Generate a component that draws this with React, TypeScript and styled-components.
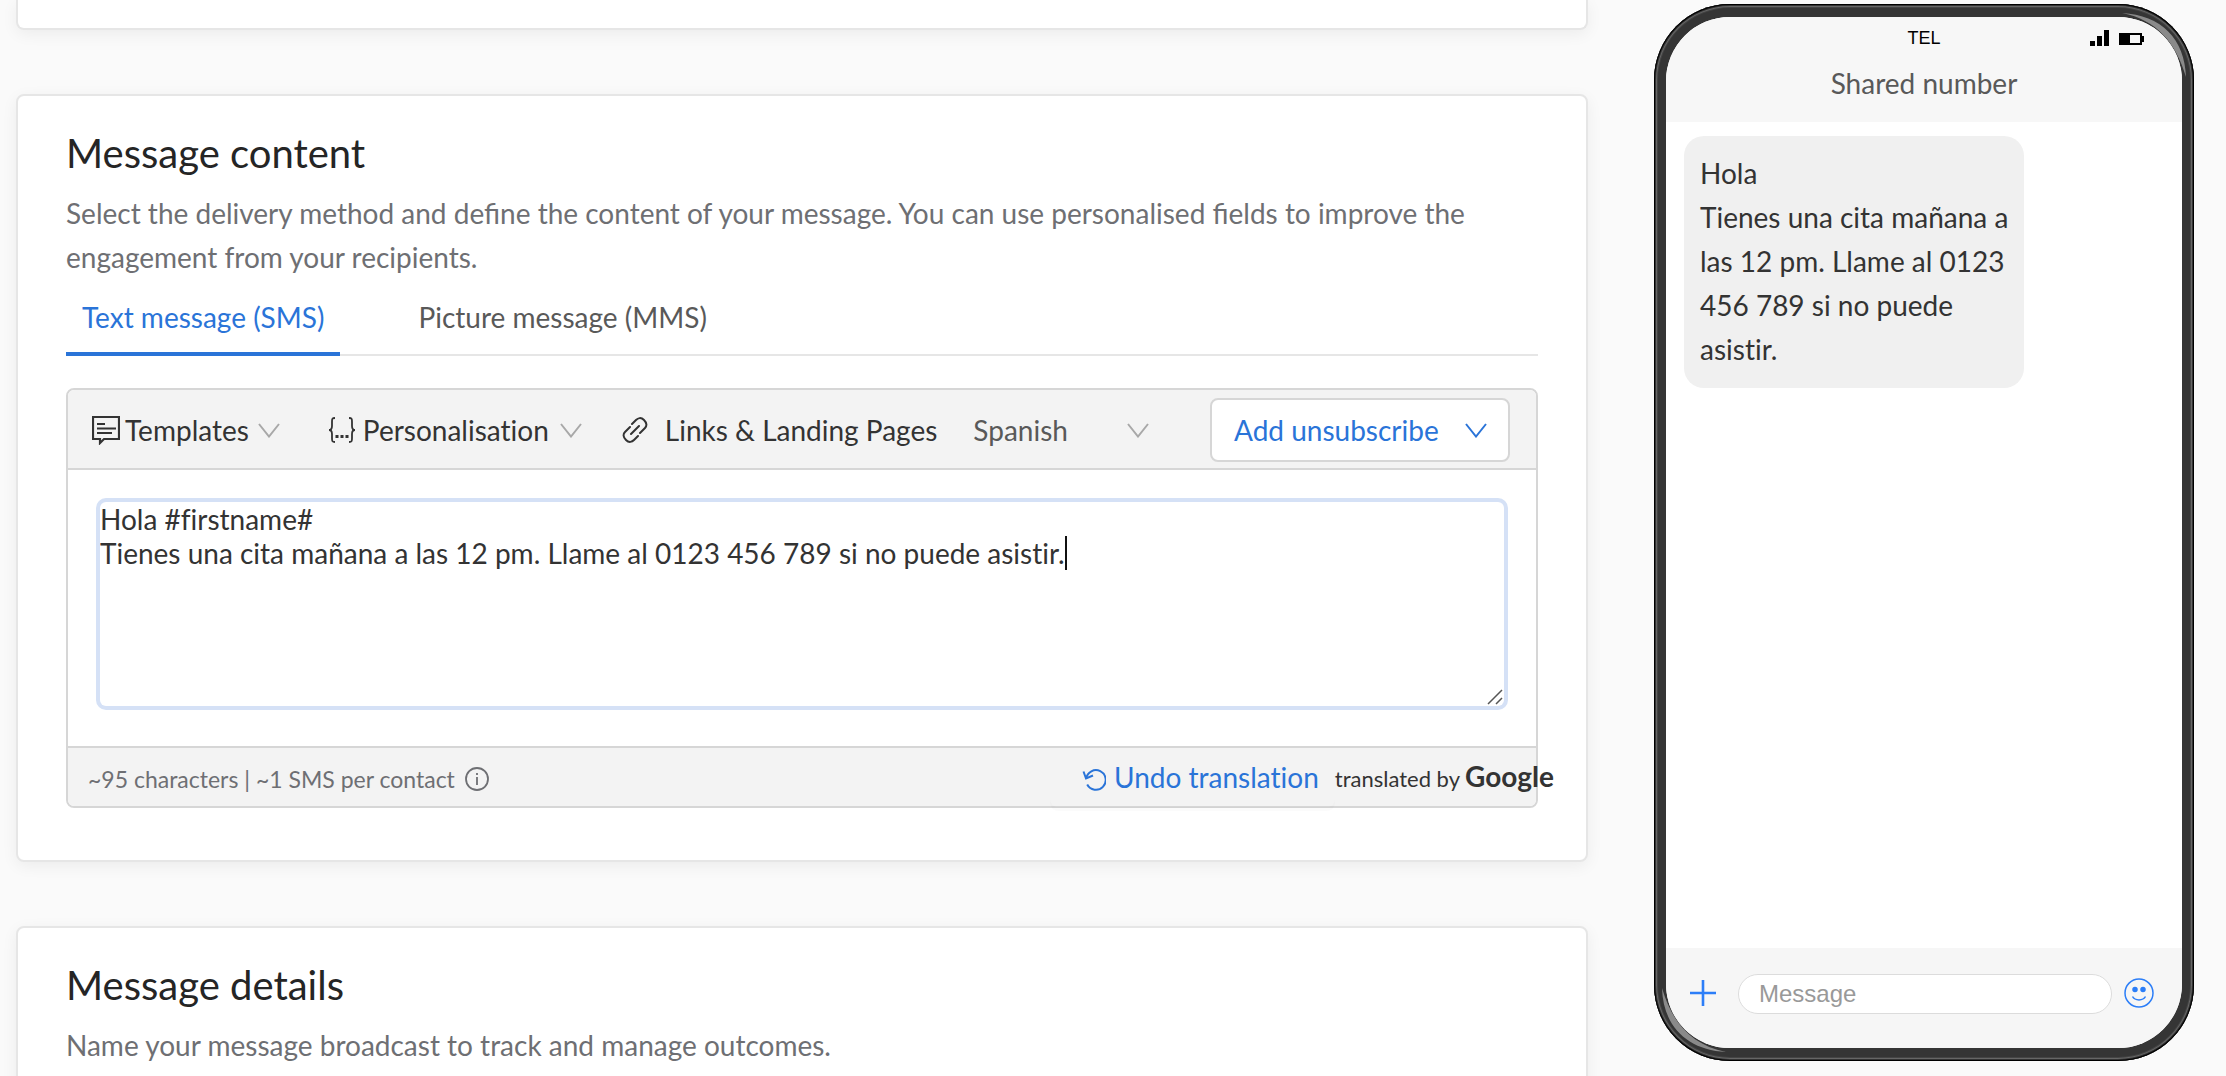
import React, { useEffect, useRef, useState } from "react";
import styled, { createGlobalStyle, css } from "styled-components";

const color = {
  page: "#fafafa",
  line: "#e6e6e6",
  edge: "#d6d6d6",
  bar: "#f3f3f3",
  ink: "#333333",
  title: "#252525",
  muted: "#6e6f73",
  soft: "#595959",
  blue: "#2a74d8",
  ios: "#2c7ef8",
};

const GlobalStyle = createGlobalStyle`
  *, *::before, *::after { box-sizing: border-box; }
  body {
    margin: 0;
    height: 100vh;
    overflow: hidden;
    background: ${color.page};
    color: ${color.ink};
    font: 400 28px/44px Lato, "Open Sans", sans-serif;
    font-variant-ligatures: none;
  }
  button, input, select, textarea {
    font: inherit;
    font-variant-ligatures: none;
    color: inherit;
  }
`;

const Page = styled.div`
  display: grid;
  grid-template-columns: minmax(0, 1fr) 540px;
  column-gap: 66px;
  align-items: start;
  height: 100vh;
  padding: 0 32px 0 16px;
  overflow: hidden;
`;

const Cards = styled.main`
  display: flex;
  flex-direction: column;
  gap: 64px;
`;

const Card = styled.section`
  padding: 32px 48px 52px;
  background: #fff;
  border: 2px solid ${color.line};
  border-radius: 8px;
  box-shadow: 0 4px 16px rgba(0, 0, 0, 0.06);
`;

const CardTail = styled(Card)`
  height: 30px;
  padding: 0;
  border-top: 0;
  border-radius: 0 0 8px 8px;
`;

const Title = styled.h2`
  margin: 0;
  color: ${color.title};
  font-size: 40px;
  font-weight: 400;
  line-height: 50px;
`;

const Lead = styled.p`
  margin: 13px 0 0;
  color: ${color.muted};
  font-variant-ligatures: normal;
`;

const Tabs = styled.div`
  display: flex;
  gap: 62px;
  margin-top: 4px;
  box-shadow: inset 0 -2px 0 ${color.line};
`;

const Tab = styled.button<{ $active?: boolean }>`
  padding: 12px 16px 13px;
  border: 0;
  border-bottom: 4px solid ${(p) => (p.$active ? color.blue : "transparent")};
  background: none;
  color: ${(p) => (p.$active ? color.blue : color.soft)};
`;

const Editor = styled.div`
  margin-top: 32px;
  border: 2px solid ${color.edge};
  border-radius: 8px;
`;

const Toolbar = styled.div`
  display: flex;
  align-items: center;
  padding: 8px 26px 6px 24px;
  background: ${color.bar};
  border-bottom: 2px solid ${color.edge};
  border-radius: 6px 6px 0 0;
`;

const Tool = styled.button<{ $gap?: number; $after?: number }>`
  display: flex;
  align-items: center;
  gap: ${(p) => p.$gap ?? 5}px;
  margin-right: ${(p) => p.$after ?? 48}px;
  padding: 0;
  border: 0;
  background: none;
  white-space: nowrap;

  > svg:last-child:not(:first-child) { margin-left: 4px; }
`;

const Language = styled.label`
  display: grid;
  align-items: center;
  width: 176px;

  > * { grid-area: 1 / 1; }
  > svg { justify-self: end; pointer-events: none; }
`;

const LanguageSelect = styled.select`
  appearance: none;
  width: 100%;
  padding: 0;
  border: 0;
  background: none;
  color: ${color.soft};
`;

const Unsubscribe = styled.button`
  display: flex;
  align-items: center;
  justify-content: space-between;
  width: 300px;
  height: 64px;
  margin-left: auto;
  padding: 0 21px 0 22px;
  background: #fff;
  border: 2px solid ${color.edge};
  border-radius: 8px;
  color: ${color.blue};
`;

const EditorBody = styled.div`
  padding: 32px 32px 40px;
`;

const MessageField = styled.div`
  position: relative;
`;

const MessageBox = styled.textarea`
  display: block;
  width: 100%;
  height: 204px;
  padding: 0;
  background: #fff;
  border: 0;
  border-radius: 6px;
  outline: 0;
  box-shadow: 0 0 0 4px #d5e1f6;
  caret-color: transparent;
  line-height: 34px;
  resize: vertical;

  &::-webkit-resizer { display: none; }
`;

const Caret = styled.span`
  position: absolute;
  width: 2px;
  height: 34px;
  background: #111;
  pointer-events: none;
`;

const Grip = styled.svg`
  position: absolute;
  right: 1px;
  bottom: 1px;
  fill: none;
  stroke: #555;
  pointer-events: none;
`;

const EditorFooter = styled.div`
  display: flex;
  align-items: center;
  height: 60px;
  padding-left: 20px;
  background: ${color.bar};
  border-top: 2px solid ${color.edge};
  border-radius: 0 0 6px 6px;
`;

const Count = styled.span`
  display: flex;
  align-items: center;
  gap: 10px;
  padding-top: 4px;
  color: ${color.muted};
  font-size: 23px;
`;

const Translation = styled.div`
  display: flex;
  align-items: center;
  margin: 0 -18px 0 auto;
  white-space: nowrap;
`;

const Undo = styled.button`
  display: flex;
  align-items: center;
  gap: 8px;
  height: 60px;
  padding: 0 16px 0 32px;
  border: 0;
  border-radius: 8px;
  background: none;
  box-shadow: 0 4px 0 rgba(0, 0, 0, 0.015);
  color: ${color.blue};
`;

const Credit = styled.span`
  font-size: 22px;

  strong { font-size: 28px; font-weight: 700; }
`;

const Phone = styled.aside`
  position: relative;
  display: flex;
  flex-direction: column;
  height: 1057px;
  margin-top: 4px;
  padding: 13px 12px;
  border-radius: 76px;
  background: #353535;
  box-shadow: inset 0 0 0 1px #000, inset 0 0 0 2px #333, inset 0 0 0 3px #666,
    inset 0 0 0 4px #444;
`;

const Shine = styled.svg`
  position: absolute;
  inset: 0;
  width: 100%;
  height: 100%;
  pointer-events: none;
`;

const Screen = styled.div`
  display: flex;
  flex: 1;
  flex-direction: column;
  overflow: hidden;
  border-radius: 64px;
  background: #fff;
`;

const PhoneHeader = styled.header`
  height: 105px;
  background: #f7f7f7;
  text-align: center;
`;

const StatusBar = styled.div`
  display: grid;
  grid-template-columns: 1fr auto 1fr;
  align-items: center;
  height: 44px;
  padding: 0 38px 2px;
  color: #000;
  font: 18px/40px "Liberation Sans", Arial, sans-serif;
`;

const StatusIcons = styled.svg`
  grid-column: 3;
  justify-self: end;
`;

const Carrier = styled.span`
  grid-column: 2;
`;

const Sender = styled.div`
  color: ${color.soft};
`;

const Thread = styled.div`
  flex: 1;
  padding: 14px 18px;
`;

const Bubble = styled.p`
  max-width: 340px;
  margin: 0;
  padding: 15px 8px 17px 16px;
  border-radius: 20px;
  background: #f0f0f0;
  white-space: pre-line;
`;

const Composer = styled.footer`
  display: flex;
  align-items: flex-start;
  height: 100px;
  padding: 26px 28px 0 24px;
  background: #f6f6f6;
`;

const IconButton = styled.button`
  display: flex;
  align-items: center;
  height: 38px;
  padding: 0;
  border: 0;
  background: none;
  color: ${color.ios};
`;

const Reply = styled.input`
  flex: 1;
  min-width: 0;
  height: 40px;
  margin: 0 12px 0 22px;
  padding: 0 20px;
  border: 1px solid #dcdcdc;
  border-radius: 20px;
  background: #fff;
  font: 24px/36px "Liberation Sans", Arial, sans-serif;

  &::placeholder { color: #999; opacity: 1; }
`;

const stroke = css`
  flex: none;
  fill: none;
  stroke: currentColor;
`;
const Glyph = styled.svg`${stroke}`;
const ChevronGlyph = styled.svg<{ $tone: string }>`
  ${stroke}
  color: ${(p) => p.$tone};
`;

const Chevron = ({ tone = "#a8a8a8" }: { tone?: string }) => (
  <ChevronGlyph $tone={tone} width="22" height="16" viewBox="0 0 22 16" strokeWidth="2">
    <path d="M1 2 11 14.500 21 2" />
  </ChevronGlyph>
);

const TemplateIcon = () => (
  <Glyph width="28" height="30" viewBox="0 0 28 30" strokeWidth="2.200">
    <path d="M1 2H27V24H12L8 28V24H1Z" />
    <path d="M5 9H13M5 13.500H24M5 18H20" strokeWidth="1.800" />
  </Glyph>
);

const BracesIcon = () => (
  <Glyph width="28" height="28" viewBox="0 0 28 28" strokeWidth="1.800">
    <path d="M7 2C4 2 4 3 4 6V10C4 12 3 14 1 14 3 14 4 16 4 18V22C4 25 4 26 7 26M21 2C24 2 24 3 24 6V10C24 12 25 14 27 14 25 14 24 16 24 18V22C24 25 24 26 21 26" />
    <path d="M7.500 20.500H10.500M12.500 20.500H15.500M17.500 20.500H20.500" strokeWidth="3" />
  </Glyph>
);

const LinkIcon = () => (
  <Glyph width="26" height="26" viewBox="0 0 26 26" strokeWidth="2" strokeLinecap="round">
    <path d="M10 7 14 3C16 1 19 0 22 3 25 6 25 9 23 11L18 16M8 10 3 15C1 17 1 20 4 23 7 26 10 25 12 23L16 19M9 17 17 9" />
  </Glyph>
);

const InfoIcon = () => (
  <Glyph width="24" height="24" viewBox="0 0 24 24" strokeWidth="1.800">
    <circle cx="12" cy="12" r="11" />
    <path d="M12 10V18M12 6V8" />
  </Glyph>
);

const UndoIcon = () => (
  <Glyph width="24" height="30" viewBox="0 0 24 30" strokeWidth="2">
    <path d="M4.200 16.500A9.800 9.800 0 1 1 5.200 22.500" />
    <path d="M1.500 9.500 4 16.500 11 13.500" />
  </Glyph>
);

const SAMPLE =
  "Hola #firstname#\nTienes una cita mañana a las 12 pm. Llame al 0123 456 789 si no puede asistir.";

const LINE = 34;

export default function App() {
  const [text, setText] = useState(SAMPLE);
  const [caret, setCaret] = useState({ left: 0, top: 0 });
  const box = useRef<HTMLTextAreaElement>(null);

  // Keeps the drawn caret at the end of the last line.
  useEffect(() => {
    const ctx = document.createElement("canvas").getContext("2d");
    if (!ctx || !box.current) return;
    const { fontSize, fontFamily } = getComputedStyle(box.current);
    ctx.font = `${fontSize} ${fontFamily}`;
    const lines = text.split("\n");
    const width = ctx.measureText(lines[lines.length - 1]).width;
    setCaret({ left: Math.round(width), top: (lines.length - 1) * LINE });
  }, [text]);

  return (
    <>
      <GlobalStyle />
      <Page>
        <Cards>
          <CardTail />
          <Card>
            <Title>Message content</Title>
            <Lead>
              Select the delivery method and define the content of your message. You can use
              personalised fields to improve the engagement from your recipients.
            </Lead>
            <Tabs role="tablist">
              <Tab role="tab" aria-selected $active>Text message (SMS)</Tab>
              <Tab role="tab" aria-selected={false}>Picture message (MMS)</Tab>
            </Tabs>
            <Editor>
              <Toolbar>
                <Tool><TemplateIcon />Templates<Chevron /></Tool>
                <Tool $gap={7} $after={40}><BracesIcon />Personalisation<Chevron /></Tool>
                <Tool $gap={17} $after={36}><LinkIcon />Links &amp; Landing Pages</Tool>
                <Language>
                  <LanguageSelect aria-label="Language" defaultValue="Spanish">
                    <option>Spanish</option>
                    <option>English</option>
                  </LanguageSelect>
                  <Chevron />
                </Language>
                <Unsubscribe>Add unsubscribe<Chevron tone={color.blue} /></Unsubscribe>
              </Toolbar>
              <EditorBody>
                <MessageField>
                  <MessageBox
                    ref={box}
                    aria-label="Message"
                    spellCheck={false}
                    value={text}
                    onChange={(e) => setText(e.target.value)}
                  />
                  <Caret style={caret} />
                  <Grip width="16" height="16" viewBox="0 0 16 16" strokeWidth="1.500">
                    <path d="M1 15 15 1M9 15 15 9" />
                  </Grip>
                </MessageField>
              </EditorBody>
              <EditorFooter>
                <Count>~95 characters | ~1 SMS per contact<InfoIcon /></Count>
                <Translation>
                  <Undo><UndoIcon />Undo translation</Undo>
                  <Credit>translated by <strong>Google</strong></Credit>
                </Translation>
              </EditorFooter>
            </Editor>
          </Card>
          <Card>
            <Title>Message details</Title>
            <Lead>Name your message broadcast to track and manage outcomes.</Lead>
          </Card>
        </Cards>

        <Phone aria-label="Preview">
          <Screen>
            <PhoneHeader>
              <StatusBar>
                <Carrier>TEL</Carrier>
                <StatusIcons width="54" height="16" viewBox="0 0 54 16">
                  <path d="M0 11H5V16H0ZM7 6H12V16H7ZM14 0H19V16H14ZM29 3H52V6H54V12H52V15H29ZM40 5V13H50V5Z" fillRule="evenodd" />
                </StatusIcons>
              </StatusBar>
              <Sender>Shared number</Sender>
            </PhoneHeader>
            <Thread>
              <Bubble>{text.replace(" #firstname#", "")}</Bubble>
            </Thread>
            <Composer>
              <IconButton aria-label="Add attachment">
                <Glyph width="26" height="26" viewBox="0 0 26 26" strokeWidth="2.600">
                  <path d="M13 0V26M0 13H26" />
                </Glyph>
              </IconButton>
              <Reply aria-label="Reply" placeholder="Message" />
              <IconButton aria-label="Emoji">
                <Glyph width="30" height="30" viewBox="0 0 30 30" strokeWidth="1.500">
                  <circle cx="15" cy="15" r="14" />
                  <path d="M8.500 18.500C11 23 19 23 21.500 18.500" />
                  <circle cx="11" cy="11.500" r="2" fill="currentColor" />
                  <circle cx="19" cy="11.500" r="2" fill="currentColor" />
                </Glyph>
              </IconButton>
            </Composer>
          </Screen>
          <Shine viewBox="0 0 540 1057" fill="#8a8a8a">
            <path d="M468 9C507 11 531 35 532 73 522 39 503 16 468 9Z" />
            <path d="M72 1048C33 1046 9 1022 8 984 18 1018 37 1041 72 1048Z" />
          </Shine>
        </Phone>
      </Page>
    </>
  );
}
